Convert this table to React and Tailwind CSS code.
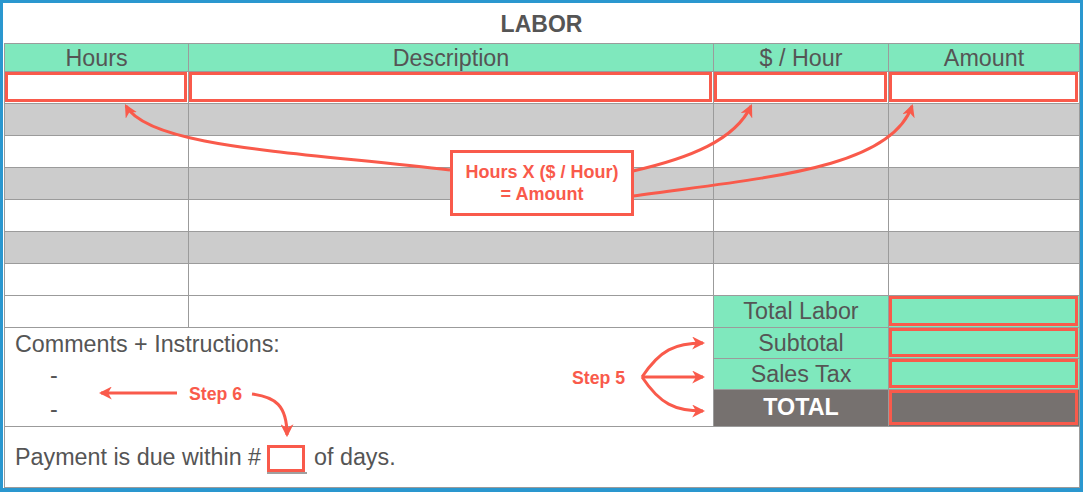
import React from "react";

const LINE = "border-[#9b9b9b]";

function RedBox({ fill = "bg-white" }) {
  return (
    <div className="h-full w-full pb-[1px] pr-[1px]">
      <div className={`h-full w-full border-[3px] border-[#f95a4b] ${fill}`} />
    </div>
  );
}

function Cell({ className = "", children }) {
  return (
    <div className={`border-r border-b ${LINE} ${className}`}>{children}</div>
  );
}

export default function App() {
  const bands = ["bg-[#cccccc]", "bg-white", "bg-[#cccccc]", "bg-white", "bg-[#cccccc]", "bg-white"];
  return (
    <div
      className="relative w-[1083px] h-[492px] bg-white text-[#555555]"
      style={{ fontFamily: '"Liberation Sans", Arial, sans-serif' }}
    >
      <div className="w-full h-full border-[3px] border-b-[4px] border-[#2a97cf] flex flex-col">
        {/* Title */}
        <div className="h-[40px] flex items-center justify-center text-[23px] font-bold leading-none pt-[2px]">
          LABOR
        </div>

        {/* Table */}
        <div className={`ml-[1px] w-[1076px] border-l border-t ${LINE}`}>
          <div className="grid grid-cols-[184px_525px_175px_191px] text-[23.3px] leading-none">
            {/* header */}
            {["Hours", "Description", "$ / Hour", "Amount"].map((h) => (
              <Cell key={h} className="h-[28px] bg-[#7fe8bd] flex items-center justify-center pt-[2px]">
                {h}
              </Cell>
            ))}
            {/* red input row */}
            {[0, 1, 2, 3].map((i) => (
              <Cell key={"r" + i} className="h-[32px] bg-white">
                <RedBox />
              </Cell>
            ))}
            {/* banded rows */}
            {bands.map((b, r) =>
              [0, 1, 2, 3].map((c) => (
                <Cell key={`b${r}-${c}`} className={`h-[32px] ${b}`} />
              ))
            )}
            {/* total labor row */}
            <Cell className="h-[32px] bg-white" />
            <Cell className="h-[32px] bg-white" />
            <Cell className="h-[32px] bg-[#7fe8bd] flex items-center justify-center pt-[1px]">Total Labor</Cell>
            <Cell className="h-[32px] bg-[#7fe8bd]">
              <RedBox fill="bg-[#7fe8bd]" />
            </Cell>
          </div>

          {/* comments + totals */}
          <div className="flex">
            <div className={`w-[709px] h-[99px] border-r border-b ${LINE} pl-[10px] pt-[3px] text-[23.3px] leading-[26px]`}>
              <div>Comments + Instructions:</div>
              <div className="mt-[5px] ml-[35px]">-</div>
              <div className="mt-[8px] ml-[35px]">-</div>
            </div>
            <div className="grid grid-cols-[175px_191px] grid-rows-[31px_31px_37px] text-[23.3px] leading-none">
              <Cell className="bg-[#7fe8bd] flex items-center justify-center pt-[1px]">Subtotal</Cell>
              <Cell className="bg-[#7fe8bd]">
                <RedBox fill="bg-[#7fe8bd]" />
              </Cell>
              <Cell className="bg-[#7fe8bd] flex items-center justify-center pt-[1px]">Sales Tax</Cell>
              <Cell className="bg-[#7fe8bd]">
                <RedBox fill="bg-[#7fe8bd]" />
              </Cell>
              <Cell className="bg-[#76716f] flex items-center justify-center font-bold text-white">TOTAL</Cell>
              <Cell className="bg-[#76716f]">
                <RedBox fill="bg-[#76716f]" />
              </Cell>
            </div>
          </div>

          {/* payment row */}
          <div className={`h-[61px] border-r border-b ${LINE} flex items-center pl-[10px] pt-[2px] text-[23.3px] leading-none`}>
            <span>Payment is due within #</span>
            <span className="ml-[6px] mt-[2px] inline-block border-b-[2px] border-[#a0a0a0] pr-[2px]">
              <span className="block w-[38px] h-[27px] border-[3px] border-[#f95a4b]" />
            </span>
            <span className="ml-[7px]">of days.</span>
          </div>
        </div>
      </div>

      {/* Annotations */}
      <svg
        className="absolute left-0 top-0 pointer-events-none"
        width="1083"
        height="492"
        viewBox="0 0 1083 492"
      >
        <defs>
          <marker
            id="ah"
            viewBox="0 0 12 12"
            refX="10"
            refY="6"
            markerWidth="13"
            markerHeight="13"
            markerUnits="userSpaceOnUse"
            orient="auto"
          >
            <path d="M0,0 L12,6 L0,12 L3.5,6 Z" fill="#f95a4b" />
          </marker>
        </defs>
        <g fill="none" stroke="#f95a4b" strokeWidth="3" markerEnd="url(#ah)">
          <path d="M450,170 C300,152 150,148 126,106" />
          <path d="M633,171 C690,158 735,140 751,106" />
          <path d="M633,196 C760,178 890,170 912,106" />
          <path d="M642,377 C660,350 675,343 703,343" />
          <path d="M642,377 L703,377" />
          <path d="M642,377 C660,404 675,411 703,411" />
          <path d="M177,393 L101,393" />
          <path d="M252,394 C275,397 287,405 287,435" />
        </g>
      </svg>

      <div className="absolute left-[450px] top-[150px] w-[184px] h-[66px] border-[3px] border-[#f95a4b] bg-white flex flex-col items-center justify-center text-[#f95a4b] font-bold text-[18px] leading-[22px]">
        <div>Hours X ($ / Hour)</div>
        <div>= Amount</div>
      </div>
      <div className="absolute left-[572px] top-[368px] text-[#f95a4b] font-bold text-[17.7px] leading-[20px]">
        Step 5
      </div>
      <div className="absolute left-[189px] top-[384px] text-[#f95a4b] font-bold text-[17.7px] leading-[20px]">
        Step 6
      </div>
    </div>
  );
}
